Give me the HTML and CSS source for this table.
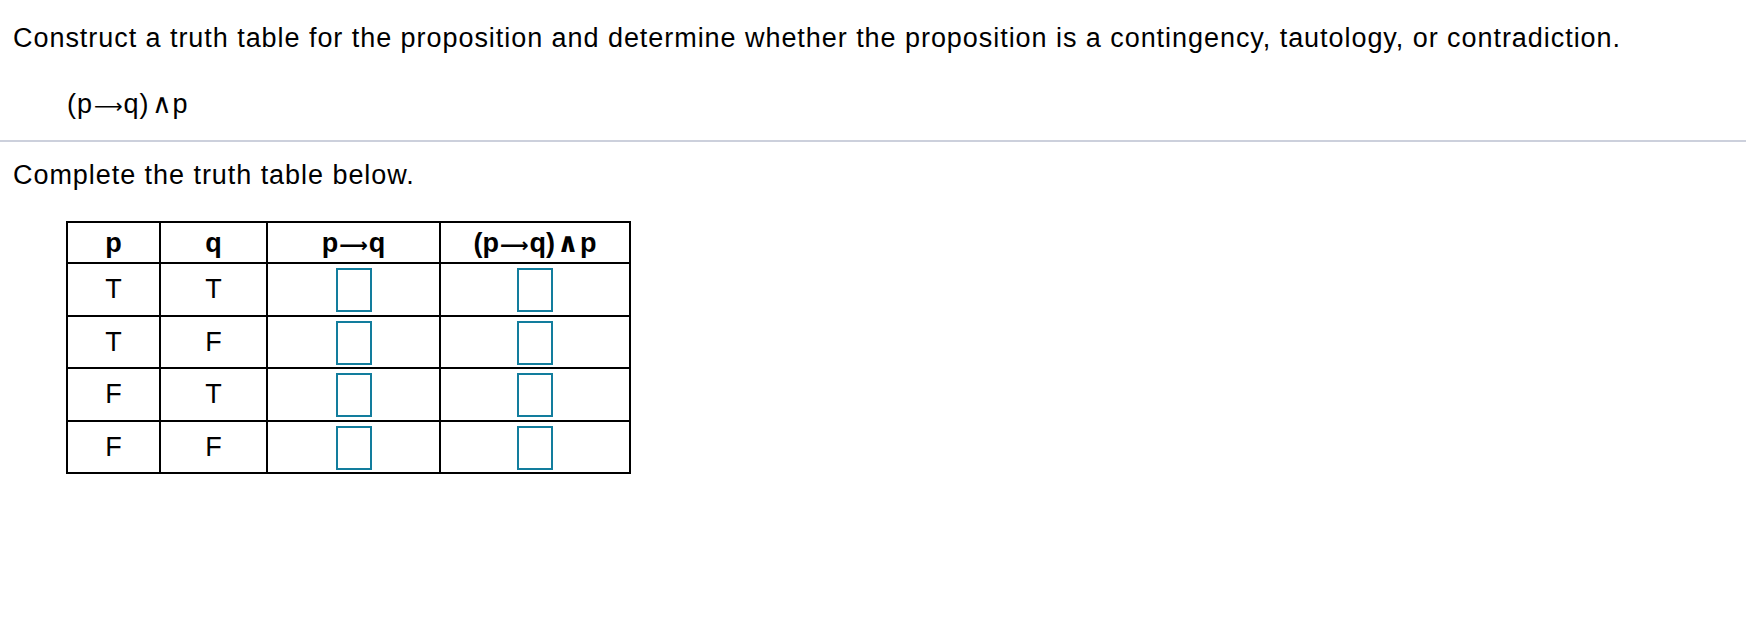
FILE: index.html
```html
<!DOCTYPE html>
<html>
<head>
<meta charset="utf-8">
<link rel="stylesheet" href="styles.css">
</head>
<body>
<div class="prompt">
  <p class="question">Construct a truth table for the proposition and determine whether the proposition is a contingency, tautology, or contradiction.</p>
  <p class="formula">(p<span class="arrow">⟶</span>q)<span class="and">∧</span>p</p>
</div>
<div class="answer">
  <p class="instruction">Complete the truth table below.</p>
  <table class="truth">
    <colgroup>
      <col class="c1"><col class="c2"><col class="c3"><col class="c4">
    </colgroup>
    <thead>
      <tr><th>p</th><th>q</th><th>p<span class="arrow">⟶</span>q</th><th>(p<span class="arrow">⟶</span>q)<span class="and">∧</span>p</th></tr>
    </thead>
    <tbody>
      <tr><td>T</td><td>T</td><td><span class="box"></span></td><td><span class="box"></span></td></tr>
      <tr><td>T</td><td>F</td><td><span class="box"></span></td><td><span class="box"></span></td></tr>
      <tr><td>F</td><td>T</td><td><span class="box"></span></td><td><span class="box"></span></td></tr>
      <tr><td>F</td><td>F</td><td><span class="box"></span></td><td><span class="box"></span></td></tr>
    </tbody>
  </table>
</div>
</body>
</html>
```
FILE: styles.css
```css
html, body {
  margin: 0;
  padding: 0;
  background: #fff;
}
body {
  font-family: "Liberation Sans", Arial, "DejaVu Sans", sans-serif;
  font-size: 27px;
  letter-spacing: 0.95px;
  color: #000;
}
p {
  margin: 0;
  line-height: 30px;
}
.arrow {
  font-family: "DejaVu Sans", sans-serif;
  font-weight: normal;
  font-size: 20px;
  letter-spacing: 0;
  line-height: 0;
  padding: 0 1px;
}
.and {
  font-family: "DejaVu Sans ExtraLight", "DejaVu Sans", sans-serif;
  font-weight: 300;
  font-size: 27px;
  letter-spacing: 0;
  line-height: 0;
  padding: 0 1px 0 2px;
}
th .arrow, th .and {
  font-family: "DejaVu Sans", sans-serif;
  font-weight: bold;
}
.prompt {
  padding: 23px 13px 21px;
  border-bottom: 2px solid #ccd0dc;
}
.formula {
  margin-top: 36px;
  padding-left: 54px;
}
.answer {
  padding: 18px 13px 0;
}
.truth {
  margin-top: 31px;
  margin-left: 53px;
  border-collapse: collapse;
  table-layout: fixed;
  width: 563px;
}
.c1 { width: 93px; }
.c2 { width: 107px; }
.c3 { width: 173px; }
.c4 { width: 190px; }
.truth th, .truth td {
  border: 2px solid #000;
  padding: 0;
  text-align: center;
  vertical-align: middle;
  line-height: 30px;
  letter-spacing: 0;
}
.truth th {
  font-weight: bold;
  height: 39px;
}
.truth td {
  height: 50.5px;
}
.box {
  display: inline-block;
  vertical-align: middle;
  box-sizing: border-box;
  width: 36px;
  height: 44px;
  border: 2px solid #127d9d;
  margin-top: 2px;
}
```
